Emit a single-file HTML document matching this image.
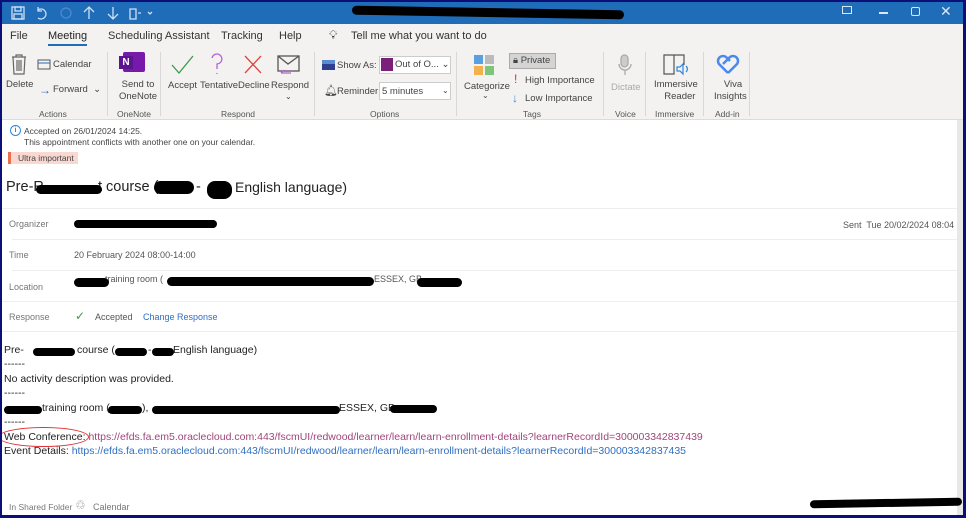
<!DOCTYPE html>
<html><head><meta charset="utf-8"><style>
*{margin:0;padding:0;box-sizing:border-box}
body{width:966px;height:518px;overflow:hidden;background:#0d0f78;font-family:"Liberation Sans",sans-serif;position:relative}
.a{position:absolute;white-space:nowrap}
#win{position:absolute;left:2px;top:2px;width:961px;height:513px;background:#fff;overflow:hidden}
#title{position:absolute;left:0;top:0;width:961px;height:22px;background:#1f6cb8}
#tabs{position:absolute;left:0;top:22px;width:961px;height:24px;background:#f3f2f1;font-size:11px;color:#333}
#ribbon{position:absolute;left:0;top:46px;width:961px;height:72px;background:#f3f2f1;border-bottom:1px solid #dcdcdc;font-size:9.5px;color:#444}
.sep{position:absolute;top:4px;width:1px;height:64px;background:#d8d8d8}
.gl{position:absolute;top:61px;font-size:8.5px;color:#555}
.blot{position:absolute;background:#000;border-radius:8px}
.lbl{font-size:9px;color:#777}
.hr{position:absolute;left:32px;width:926px;height:1px;background:#eee}
.body{font-size:10.5px;color:#222}
a{color:#2f6fc0}
#scroll{position:absolute;right:0;top:118px;width:6px;height:395px;background:#e8e8e8}
.h{position:absolute;top:177px;font-size:14.5px;color:#222;white-space:nowrap}
.b{position:absolute;font-size:10.5px;color:#222;white-space:nowrap}
</style></head><body>
<div id="win">
<div id="title">
 <svg class="a" style="left:8px;top:3px" width="150" height="16" fill="none" stroke="#cfe0f2" stroke-width="1.3">
  <rect x="2" y="2" width="12" height="12"/><rect x="5" y="2" width="6" height="4"/><rect x="4" y="9" width="8" height="5"/>
  <path d="M28 5 a5 5 0 1 1 0 8 M28 2 v4 h4"/>
  <circle cx="56" cy="8" r="5" stroke="#4f8acc"/>
  <path d="M79 14 V2 M74 7 l5-5 5 5"/>
  <path d="M103 2 V14 M98 9 l5 5 5-5"/>
  <path d="M120 4 h6 v10 h-6z M128 8 l3 0"/>
  <path d="M138 7 l2 2 2-2"/>
 </svg>
 <div class="blot" style="left:350px;top:6px;width:272px;height:9px;transform:rotate(1deg)"></div>
 <div class="a" style="left:840px;top:4px;width:10px;height:8px;border:1.5px solid #dbe7f5"></div>
 <div class="a" style="left:877px;top:10px;width:9px;height:1.5px;background:#dbe7f5"></div>
 <div class="a" style="left:909px;top:5px;width:9px;height:9px;border:1.5px solid #dbe7f5;border-radius:2px"></div>
 <div class="a" style="left:938px;top:1px;color:#dbe7f5;font-size:14px">✕</div>
</div>
<div id="tabs">
 <span class="a" style="left:8px;top:6px">File</span>
 <span class="a" style="left:46px;top:6px;color:#222">Meeting</span>
 <div class="a" style="left:46px;top:20px;width:39px;height:2px;background:#1f6cb8"></div>
 <span class="a" style="left:106px;top:6px">Scheduling Assistant</span>
 <span class="a" style="left:219px;top:6px">Tracking</span>
 <span class="a" style="left:277px;top:6px">Help</span>
 <span class="a" style="left:327px;top:4px;font-size:12px">💡︎</span>
 <span class="a" style="left:349px;top:6px">Tell me what you want to do</span>
</div>
<div id="ribbon">
 <svg class="a" style="left:8px;top:5px" width="18" height="22" fill="none" stroke="#666" stroke-width="1.2"><path d="M2 4 h14 M6 4 V2 h6 v2 M3 4 l1 17 h10 l1-17 M7 7 v11 M9 7 v11 M11 7 v11"/></svg>
 <span class="a" style="left:4px;top:31px">Delete</span>
 <svg class="a" style="left:35px;top:10px" width="14" height="12" fill="none" stroke="#555"><rect x="1" y="2" width="12" height="9"/><path d="M1 5h12" stroke="#1f6cb8"/></svg>
 <span class="a" style="left:51px;top:11px">Calendar</span>
 <span class="a" style="left:37px;top:35px;color:#1f6cb8;font-size:12px">→</span>
 <span class="a" style="left:51px;top:36px">Forward &nbsp;⌄</span>
 <span class="gl" style="left:37px">Actions</span>
 <div class="sep" style="left:105px"></div>
 <div class="a" style="left:121px;top:4px;width:22px;height:20px;background:#7719aa;border-radius:2px"></div>
 <div class="a" style="left:117px;top:8px;width:14px;height:13px;background:#5c1590;color:#fff;font-size:10px;font-weight:bold;text-align:center;line-height:13px">N</div>
 <span class="a" style="left:117px;top:31px;text-align:center;line-height:12px">Send to<br>OneNote</span>
 <span class="gl" style="left:115px">OneNote</span>
 <div class="sep" style="left:158px"></div>
 <svg class="a" style="left:167px;top:5px" width="135" height="24" fill="none" stroke-width="1.3">
  <path d="M3 12 l7 8 L24 3" stroke="#3a9a4a"/>
  <path d="M43 5 a5 5 0 1 1 5 6 v5 M48 20 v1" stroke="#b561d8"/>
  <path d="M76 3 L92 20 M92 3 L76 20" stroke="#e0443e"/>
  <rect x="109" y="3" width="21" height="15" stroke="#555"/><path d="M109 3 l10 8 11-8" stroke="#555"/><path d="M112 20 h10 M112 20 l3-3" stroke="#b561d8"/>
 </svg>
 <span class="a" style="left:166px;top:32px">Accept</span>
 <span class="a" style="left:198px;top:32px">Tentative</span>
 <span class="a" style="left:236px;top:32px">Decline</span>
 <span class="a" style="left:269px;top:32px">Respond</span>
 <span class="a" style="left:283px;top:44px;font-size:8px">⌄</span>
 <span class="gl" style="left:219px">Respond</span>
 <div class="sep" style="left:312px"></div>
 <div class="a" style="left:320px;top:12px;width:13px;height:10px;background:#2e3f8f;border-top:4px solid #5b8bd0"></div>
 <span class="a" style="left:335px;top:12px">Show As:</span>
 <div class="a" style="left:377px;top:8px;width:72px;height:18px;background:#fff;border:1px solid #ccc"></div>
 <div class="a" style="left:379px;top:10px;width:12px;height:13px;background:#7a1f7a"></div>
 <span class="a" style="left:393px;top:11px">Out of O... ⌄</span>
 <span class="a" style="left:322px;top:36px;font-size:11px">🔔︎</span>
 <span class="a" style="left:335px;top:38px">Reminder:</span>
 <div class="a" style="left:377px;top:34px;width:72px;height:18px;background:#fff;border:1px solid #ccc"></div>
 <span class="a" style="left:380px;top:38px">5 minutes</span>
 <span class="a" style="left:440px;top:38px;font-size:8px">⌄</span>
 <span class="gl" style="left:368px">Options</span>
 <div class="sep" style="left:454px"></div>
 <div class="a" style="left:472px;top:7px;width:9px;height:9px;background:#5aa0e0"></div>
 <div class="a" style="left:483px;top:7px;width:9px;height:9px;background:#bbb"></div>
 <div class="a" style="left:472px;top:18px;width:9px;height:9px;background:#f2b14b"></div>
 <div class="a" style="left:483px;top:18px;width:9px;height:9px;background:#7bc67b"></div>
 <span class="a" style="left:462px;top:33px">Categorize</span>
 <span class="a" style="left:480px;top:43px;font-size:8px">⌄</span>
 <div class="a" style="left:507px;top:5px;width:47px;height:16px;background:#d4d4d4;border:1px solid #aaa"></div>
 <span class="a" style="left:511px;top:7px">🔒︎ Private</span>
 <span class="a" style="left:512px;top:24px;color:#e03030;font-size:12px">!</span>
 <span class="a" style="left:523px;top:27px">High Importance</span>
 <span class="a" style="left:510px;top:43px;color:#3a8ad8;font-size:12px">↓</span>
 <span class="a" style="left:523px;top:45px">Low Importance</span>
 <span class="gl" style="left:521px">Tags</span>
 <div class="sep" style="left:601px"></div>
 <svg class="a" style="left:616px;top:6px" width="14" height="22" fill="none" stroke="#aaa" stroke-width="1.3"><rect x="3" y="1" width="7" height="12" rx="3.5" fill="#ccc"/><path d="M1 10 a6 6 0 0 0 12 0 M7 16 v5"/></svg>
 <span class="a" style="left:609px;top:34px;color:#aaa">Dictate</span>
 <span class="gl" style="left:613px">Voice</span>
 <div class="sep" style="left:643px"></div>
 <svg class="a" style="left:660px;top:5px" width="28" height="24" fill="none" stroke="#555" stroke-width="1.2"><path d="M2 2 h10 v19 H2z M12 2 h10 v10"/><path d="M15 14 h3 l3-3 v10 l-3-3 h-3z M24 13 a4 4 0 0 1 0 6" stroke="#2f86d8"/></svg>
 <span class="a" style="left:652px;top:31px;text-align:center;line-height:12px">Immersive<br>&nbsp;&nbsp;&nbsp;Reader</span>
 <span class="gl" style="left:653px">Immersive</span>
 <div class="sep" style="left:701px"></div>
 <svg class="a" style="left:714px;top:5px" width="24" height="22" fill="none" stroke="#4a8af0" stroke-width="2.5"><path d="M12 20 L3 11 a5 5 0 0 1 8-6 l3 3 M12 20 l9-9 a5 5 0 0 0-8-6 l-6 6"/></svg>
 <span class="a" style="left:712px;top:31px;text-align:center;line-height:12px">&nbsp;&nbsp;Viva<br>Insights</span>
 <span class="gl" style="left:713px">Add-in</span>
 <div class="sep" style="left:747px"></div>
</div>
<div id="scroll"></div>
<!-- content -->
<div class="a" style="left:8px;top:123px;width:11px;height:11px;border:1px solid #2f86d8;border-radius:50%;font-size:7px;color:#2f86d8;text-align:center;line-height:9px;font-weight:bold">i</div>
<span class="a" style="left:22px;top:124px;font-size:8.5px;color:#444">Accepted on 26/01/2024 14:25.</span>
<span class="a" style="left:22px;top:135px;font-size:8.5px;color:#444">This appointment conflicts with another one on your calendar.</span>
<div class="a" style="left:6px;top:150px;width:70px;height:12px;background:#f8d8d0;border-left:3px solid #e8704f"></div>
<span class="a" style="left:16px;top:151px;font-size:8.5px;color:#444">Ultra important</span>
<span class="h" style="left:4px">Pre-R</span>
<span class="h" style="left:96px">t course (</span>
<span class="h" style="left:194px">-</span>
<span class="h" style="left:233px;font-size:14px">English language)</span>
<div class="blot" style="left:34px;top:183px;width:66px;height:9px"></div>
<div class="blot" style="left:152px;top:179px;width:40px;height:13px"></div>
<div class="blot" style="left:205px;top:179px;width:25px;height:18px"></div>
<div class="a" style="left:0;top:206px;width:955px;height:1px;background:#eee"></div>
<span class="a lbl" style="left:7px;top:217px">Organizer</span>
<div class="blot" style="left:72px;top:218px;width:143px;height:8px"></div>
<span class="a lbl" style="left:841px;top:218px;color:#555">Sent&nbsp; Tue 20/02/2024 08:04</span>
<div class="hr" style="top:237px;left:10px;width:945px"></div>
<span class="a lbl" style="left:7px;top:248px">Time</span>
<span class="a lbl" style="left:72px;top:248px;color:#555">20 February 2024 08:00-14:00</span>
<div class="hr" style="top:268px;left:10px;width:945px"></div>
<span class="a lbl" style="left:7px;top:280px">Location</span>
<span class="a lbl" style="left:103px;top:272px;color:#555">training room (</span>
<div class="blot" style="left:72px;top:276px;width:35px;height:9px"></div>
<div class="blot" style="left:165px;top:275px;width:207px;height:9px"></div>
<span class="a lbl" style="left:372px;top:272px;color:#555">ESSEX, GB,</span>
<div class="blot" style="left:415px;top:276px;width:45px;height:9px"></div>
<div class="hr" style="top:299px;left:0;width:955px"></div>
<span class="a lbl" style="left:7px;top:310px">Response</span>
<span class="a" style="left:73px;top:307px;color:#3a9a4a;font-size:12px">✓</span>
<span class="a lbl" style="left:93px;top:310px;color:#555">Accepted</span>
<span class="a lbl" style="left:141px;top:310px;color:#2f6fc0">Change Response</span>
<div class="hr" style="top:329px;left:0;width:955px"></div>
<span class="b" style="left:2px;top:342px">Pre-</span>
<span class="b" style="left:75px;top:342px">course (</span>
<span class="b" style="left:146px;top:342px">-</span>
<span class="b" style="left:171px;top:342px">English language)</span>
<span class="b" style="left:2px;top:356px">------</span>
<span class="b" style="left:2px;top:371px">No activity description was provided.</span>
<span class="b" style="left:2px;top:385px">------</span>
<span class="b" style="left:40px;top:400px">training room (</span>
<span class="b" style="left:140px;top:400px">),</span>
<span class="b" style="left:337px;top:400px">ESSEX, GB,</span>
<span class="b" style="left:2px;top:414px">------</span>
<span class="b" style="left:2px;top:429px">Web Conference: <a style="color:#a0457a">https://efds.fa.em5.oraclecloud.com:443/fscmUI/redwood/learner/learn/learn-enrollment-details?learnerRecordId=300003342837439</a></span>
<span class="b" style="left:2px;top:443px">Event Details: <a>https://efds.fa.em5.oraclecloud.com:443/fscmUI/redwood/learner/learn/learn-enrollment-details?learnerRecordId=300003342837435</a></span>
<div class="blot" style="left:31px;top:346px;width:42px;height:8px"></div>
<div class="blot" style="left:113px;top:346px;width:32px;height:8px"></div>
<div class="blot" style="left:150px;top:346px;width:22px;height:8px"></div>
<div class="blot" style="left:2px;top:404px;width:38px;height:8px"></div>
<div class="blot" style="left:106px;top:404px;width:34px;height:8px"></div>
<div class="blot" style="left:150px;top:404px;width:188px;height:8px"></div>
<div class="blot" style="left:388px;top:403px;width:47px;height:8px"></div>
<div class="a" style="left:-4px;top:425px;width:91px;height:20px;border:1.3px solid #e03030;border-radius:50%"></div>
<span class="a" style="left:7px;top:500px;font-size:8.5px;color:#777">In Shared Folder</span>
<span class="a" style="left:73px;top:496px;font-size:12px;color:#888">♲</span>
<span class="a" style="left:91px;top:500px;font-size:9px;color:#777">Calendar</span>
<div class="blot" style="left:808px;top:497px;width:152px;height:8px;transform:rotate(-1deg)"></div>
</div>
</body></html>
